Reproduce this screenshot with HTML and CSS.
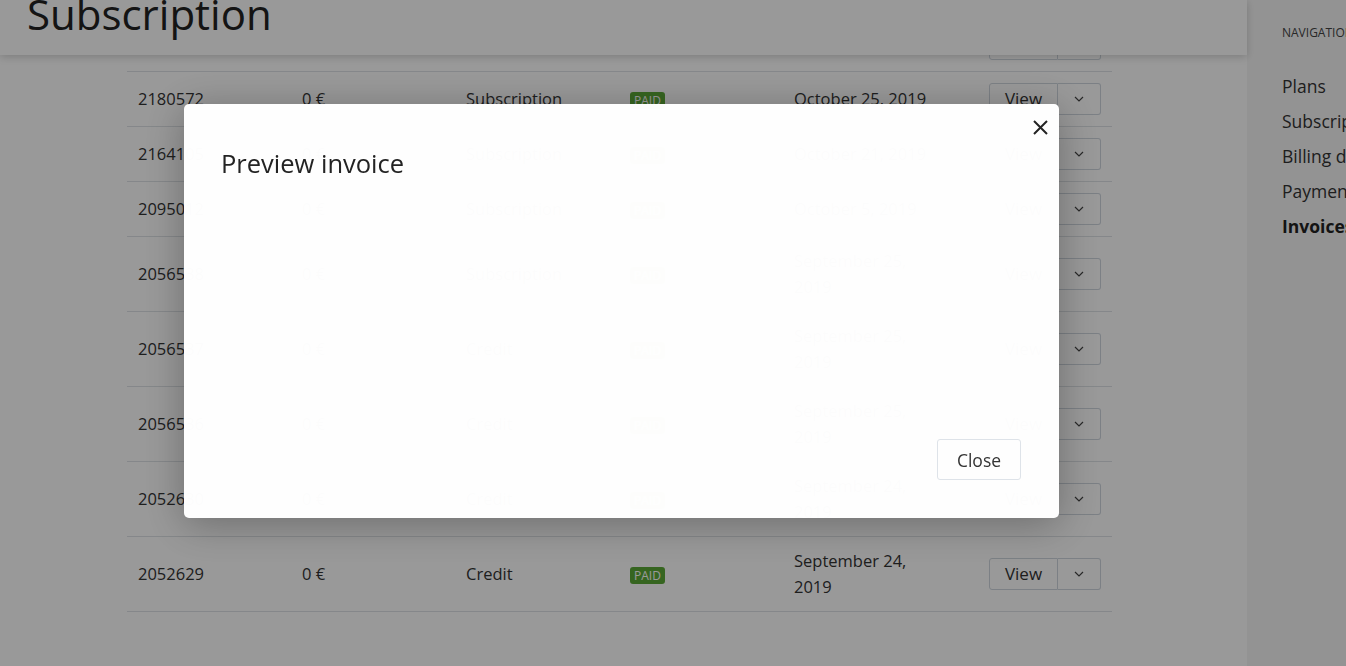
FILE: index.html
```html
<!DOCTYPE html>
<html lang="en">
<head>
<meta charset="utf-8">
<title>Invoices</title>
<link rel="stylesheet" href="styles.css">
</head>
<body>
<div class="page">
  <main class="main">
    <header class="topbar"><h1 class="title">Subscription</h1></header>
    <div class="scroller">
      <table class="invoices">
        <colgroup><col class="c"><col class="c"><col class="c"><col class="c"><col class="c"><col class="c-last"></colgroup>
        <tbody>
          <tr class="hidden-row"><td>2190001</td><td>0 €</td><td>Subscription</td><td><span class="badge">PAID</span></td><td>October 28, 2019</td><td class="act"><span class="btns"><span class="btn">View</span><span class="btn dd"><svg viewBox="0 0 10 6" width="10" height="6"><path d="M1 1l4 4 4-4" fill="none" stroke="currentColor" stroke-width="1.2"/></svg></span></span></td></tr>
          <tr><td>2180572</td><td>0 €</td><td>Subscription</td><td><span class="badge">PAID</span></td><td>October 25, 2019</td><td class="act"><span class="btns"><span class="btn">View</span><span class="btn dd"><svg viewBox="0 0 10 6" width="10" height="6"><path d="M1 1l4 4 4-4" fill="none" stroke="currentColor" stroke-width="1.2"/></svg></span></span></td></tr>
          <tr><td>2164105</td><td>0 €</td><td>Subscription</td><td><span class="badge">PAID</span></td><td>October 21, 2019</td><td class="act"><span class="btns"><span class="btn">View</span><span class="btn dd"><svg viewBox="0 0 10 6" width="10" height="6"><path d="M1 1l4 4 4-4" fill="none" stroke="currentColor" stroke-width="1.2"/></svg></span></span></td></tr>
          <tr><td>2095012</td><td>0 €</td><td>Subscription</td><td><span class="badge">PAID</span></td><td>October 5, 2019</td><td class="act"><span class="btns"><span class="btn">View</span><span class="btn dd"><svg viewBox="0 0 10 6" width="10" height="6"><path d="M1 1l4 4 4-4" fill="none" stroke="currentColor" stroke-width="1.2"/></svg></span></span></td></tr>
          <tr><td>2056538</td><td>0 €</td><td>Subscription</td><td><span class="badge">PAID</span></td><td>September 25, 2019</td><td class="act"><span class="btns"><span class="btn">View</span><span class="btn dd"><svg viewBox="0 0 10 6" width="10" height="6"><path d="M1 1l4 4 4-4" fill="none" stroke="currentColor" stroke-width="1.2"/></svg></span></span></td></tr>
          <tr><td>2056537</td><td>0 €</td><td>Credit</td><td><span class="badge">PAID</span></td><td>September 25, 2019</td><td class="act"><span class="btns"><span class="btn">View</span><span class="btn dd"><svg viewBox="0 0 10 6" width="10" height="6"><path d="M1 1l4 4 4-4" fill="none" stroke="currentColor" stroke-width="1.2"/></svg></span></span></td></tr>
          <tr><td>2056536</td><td>0 €</td><td>Credit</td><td><span class="badge">PAID</span></td><td>September 25, 2019</td><td class="act"><span class="btns"><span class="btn">View</span><span class="btn dd"><svg viewBox="0 0 10 6" width="10" height="6"><path d="M1 1l4 4 4-4" fill="none" stroke="currentColor" stroke-width="1.2"/></svg></span></span></td></tr>
          <tr><td>2052630</td><td>0 €</td><td>Credit</td><td><span class="badge">PAID</span></td><td>September 24, 2019</td><td class="act"><span class="btns"><span class="btn">View</span><span class="btn dd"><svg viewBox="0 0 10 6" width="10" height="6"><path d="M1 1l4 4 4-4" fill="none" stroke="currentColor" stroke-width="1.2"/></svg></span></span></td></tr>
          <tr><td>2052629</td><td>0 €</td><td>Credit</td><td><span class="badge">PAID</span></td><td>September 24, 2019</td><td class="act"><span class="btns"><span class="btn">View</span><span class="btn dd"><svg viewBox="0 0 10 6" width="10" height="6"><path d="M1 1l4 4 4-4" fill="none" stroke="currentColor" stroke-width="1.2"/></svg></span></span></td></tr>
        </tbody>
      </table>
    </div>
  </main>
  <aside class="side">
    <div class="side-label">Navigation</div>
    <nav class="side-nav">
      <a class="side-link">Plans</a>
      <a class="side-link">Subscription</a>
      <a class="side-link">Billing details</a>
      <a class="side-link">Payment methods</a>
      <a class="side-link active">Invoices</a>
    </nav>
  </aside>
</div>
<div class="backdrop"></div>
<div class="modal-wrap">
  <div class="modal">
    <div class="modal-head">
      <h2 class="modal-title">Preview invoice</h2>
      <span class="modal-x"><svg viewBox="0 0 17 17" width="17" height="17"><path d="M2 2l13 13M15 2L2 15" stroke="#222" stroke-width="2" fill="none"/></svg></span>
    </div>
    <div class="modal-body"></div>
    <div class="modal-foot"><span class="close-btn">Close</span></div>
  </div>
</div>
</body>
</html>
```
FILE: styles.css
```css
html, body {
  margin: 0;
  padding: 0;
  height: 100%;
  overflow: hidden;
}
body {
  font-family: "Open Sans", "Noto Sans", sans-serif;
  color: #333;
  background: #fff;
}
.page {
  display: flex;
  height: 666px;
  width: 1346px;
}
.main {
  width: 1247px;
  flex: none;
  display: flex;
  flex-direction: column;
  background: #fff;
  position: relative;
}
.topbar {
  height: 55px;
  flex: none;
  background: #fff;
  box-shadow: 0 2px 8px rgba(0,0,0,0.18);
  position: relative;
  z-index: 2;
  overflow: hidden;
}
.title {
  margin: -16px 0 0 27px;
  font-size: 42px;
  font-weight: 400;
  line-height: 60px;
  color: #222;
}
.scroller {
  flex: 1;
  overflow: hidden;
}
.invoices {
  margin: -39px 0 0 127px;
  width: 985px;
  border-collapse: collapse;
  table-layout: fixed;
  font-size: 16.5px;
}
.c { width: 164px; }
.c-last { width: 165px; }
.invoices td {
  border-top: 1px solid #dee2e6;
  border-bottom: 1px solid #dee2e6;
  padding: 11px 11px;
  line-height: 26px;
  vertical-align: middle;
  color: #333;
}
.hidden-row td { color: transparent; }
.hidden-row .badge { background: transparent; color: transparent; }
.act { text-align: right; }
.btns {
  display: inline-flex;
  vertical-align: middle;
}
.btn {
  height: 30px;
  line-height: 30px;
  border: 1px solid #cfd6de;
  padding: 0 14px;
  font-size: 17px;
  color: #333;
  border-radius: 3px 0 0 3px;
  display: inline-flex;
  align-items: center;
  box-sizing: content-box;
  width: 39px;
  justify-content: center;
}
.btn.dd {
  border-left: none;
  border-radius: 0 3px 3px 0;
  width: 14px;
  color: #444;
}
.badge {
  display: inline-block;
  background: #5ba936;
  color: #fff;
  font-size: 12px;
  line-height: 17px;
  padding: 0 4px;
  border-radius: 3px;
  vertical-align: middle;
}
.side {
  flex: none;
  width: 260px;
  background: #f6f6f6;
  padding: 24px 0 0 35px;
  box-sizing: border-box;
}
.side-label {
  font-size: 12px;
  text-transform: uppercase;
  color: #444;
  line-height: 18px;
  margin-bottom: 27px;
  white-space: nowrap;
}
.side-nav {
  display: flex;
  flex-direction: column;
}
.side-link {
  font-size: 17.5px;
  line-height: 35px;
  color: #333;
  white-space: nowrap;
}
.side-link.active { font-weight: 700; color: #222; }

.backdrop {
  position: fixed;
  inset: 0;
  background: rgba(0,0,0,0.4);
  z-index: 10;
}
.modal-wrap {
  position: fixed;
  inset: 0;
  z-index: 11;
  padding: 104px 0 0 184px;
}
.modal {
  width: 875px;
  height: 414px;
  background: #fff;
  border-radius: 5px;
  box-shadow: 0 6px 40px rgba(0,0,0,0.3);
  display: flex;
  flex-direction: column;
  box-sizing: border-box;
  padding: 0 38px 38px 37px;
  opacity: 0.99;
}
.modal-head {
  display: flex;
  justify-content: space-between;
  align-items: flex-start;
  padding-top: 41px;
  position: relative;
}
.modal-title {
  margin: 0;
  font-size: 25.5px;
  font-weight: 400;
  line-height: 36px;
  color: #222;
}
.modal-x {
  position: absolute;
  right: -28px;
  top: 15px;
  width: 17px;
  height: 17px;
  display: flex;
}
.modal-body { flex: 1; }
.modal-foot {
  display: flex;
  justify-content: flex-end;
}
.close-btn {
  width: 82px;
  height: 39px;
  border: 1px solid #dfe4ea;
  border-radius: 3px;
  display: flex;
  align-items: center;
  justify-content: center;
  font-size: 17.5px;
  color: #333;
}
```
